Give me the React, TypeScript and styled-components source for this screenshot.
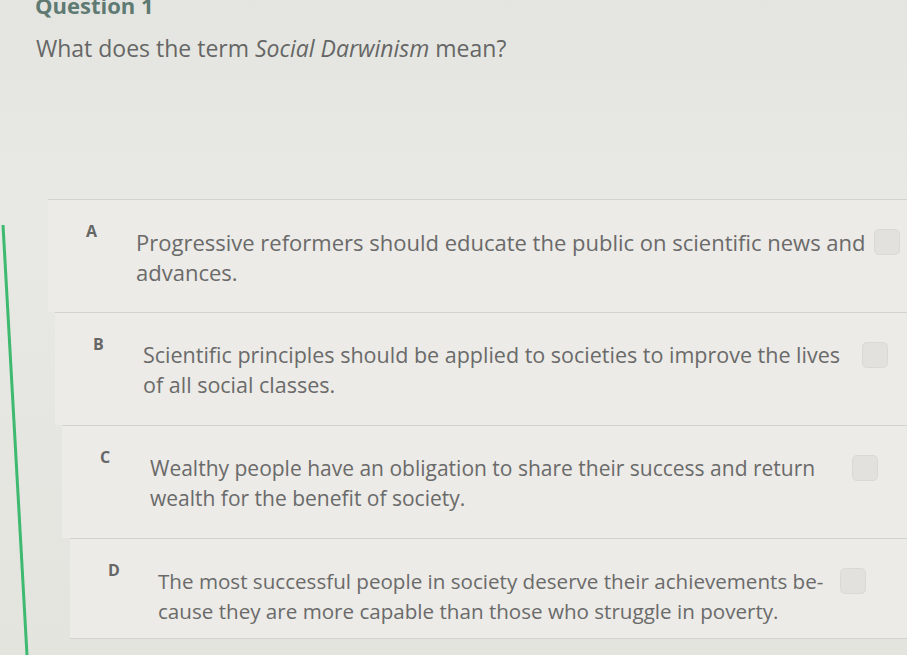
import { FC } from 'react'
import styled, { createGlobalStyle } from 'styled-components'

const GlobalStyle = createGlobalStyle`
  html, body {
    margin: 0;
    padding: 0;
    background: #e5e6e1;
  }
  body {
    font-family: 'Open Sans', 'Noto Sans', sans-serif;
  }
`

const Page = styled.div`
  display: flex;
  width: 907px;
  height: 655px;
  overflow: hidden;
  background: linear-gradient(180deg, #e4e5e0 0%, #e8e9e4 30%, #e4e4df 100%);
`

const Rail = styled.div`
  flex: 0 0 30px;
  padding-top: 225px;
  display: flex;
  flex-direction: column;
`

const Main = styled.div`
  flex: 1;
  min-width: 0;
  padding-left: 5px;
  display: flex;
  flex-direction: column;
`

const Title = styled.h1`
  margin: -9px 0 0;
  font-size: 22px;
  line-height: 28px;
  font-weight: 700;
  color: #5e7a73;
`

const Question = styled.p`
  margin: 14px 0 0 1px;
  font-size: 23px;
  line-height: 30px;
  color: #666666;

  em {
    font-style: italic;
  }
`

const OptionList = styled.div`
  margin-top: 136px;
  display: flex;
  flex-direction: column;
`

const OptionRow = styled.div<{ $indent: number; $inset: number }>`
  display: grid;
  grid-template-columns: 50px 1fr 26px;
  align-items: start;
  margin-left: ${(p) => 13 + p.$indent}px;
  padding: 27px ${(p) => p.$inset}px 25px 38px;
  background: #ecebe7;
  border-top: 1px solid #d2d2ce;

  &:last-child {
    padding-bottom: 12px;
    border-bottom: 1px solid #d2d2ce;
  }
`

const Letter = styled.span`
  margin-top: -5px;
  font-size: 16px;
  line-height: 18px;
  font-weight: 700;
  color: #666666;
`

const Answer = styled.div<{ $size: number }>`
  font-size: ${(p) => p.$size}px;
  line-height: 30px;
  color: #6a6a6a;

  span {
    display: block;
    white-space: nowrap;
  }
`

const Check = styled.span`
  width: 26px;
  height: 26px;
  margin-top: 2px;
  box-sizing: border-box;
  border-radius: 5px;
  background: #e2e1dd;
  border: 1px solid #dad9d5;
`

interface Choice {
  letter: string
  lines: string[]
  indent: number
  inset: number
  size: number
}

const choices: Choice[] = [
  {
    letter: 'A',
    lines: ['Progressive reformers should educate the public on scientific news and', 'advances.'],
    indent: 0,
    inset: 7,
    size: 22,
  },
  {
    letter: 'B',
    lines: ['Scientific principles should be applied to societies to improve the lives', 'of all social classes.'],
    indent: 7,
    inset: 19,
    size: 21.5,
  },
  {
    letter: 'C',
    lines: ['Wealthy people have an obligation to share their success and return', 'wealth for the benefit of society.'],
    indent: 14,
    inset: 29,
    size: 21,
  },
  {
    letter: 'D',
    lines: [
      'The most successful people in society deserve their achievements be-',
      'cause they are more capable than those who struggle in poverty.',
    ],
    indent: 22,
    inset: 41,
    size: 20.6,
  },
]

const App: FC = () => (
  <>
    <GlobalStyle />
    <Page>
      <Rail>
        <svg width="30" height="430" viewBox="0 0 30 430">
          <line x1="3" y1="0" x2="27" y2="430" stroke="#3dba70" strokeWidth="3" />
        </svg>
      </Rail>
      <Main>
        <Title>Question 1</Title>
        <Question>
          What does the term <em>Social Darwinism</em> mean?
        </Question>
        <OptionList>
          {choices.map((c) => (
            <OptionRow key={c.letter} $indent={c.indent} $inset={c.inset}>
              <Letter>{c.letter}</Letter>
              <Answer $size={c.size}>
                {c.lines.map((l) => (
                  <span key={l}>{l}</span>
                ))}
              </Answer>
              <Check />
            </OptionRow>
          ))}
        </OptionList>
      </Main>
    </Page>
  </>
)

export default App
